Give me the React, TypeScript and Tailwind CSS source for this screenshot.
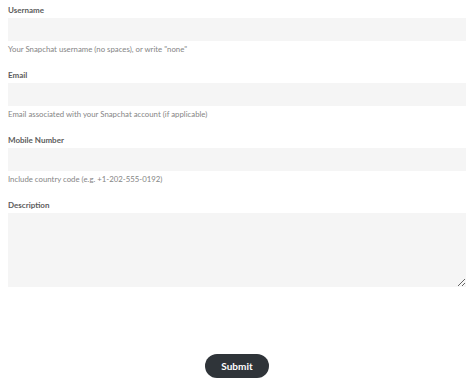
import React from "react";

const font = { fontFamily: "Lato, 'Open Sans', sans-serif" };

function Field({ label, help, tall }: { label: string; help?: string; tall?: boolean }) {
  return (
    <div className="flex flex-col">
      <label className="h-[12px] text-[8px] leading-[12px] font-bold text-[#5c5c5c]">{label}</label>
      {tall ? (
        <textarea className="mt-[2px] h-[74px] w-full bg-[#f5f5f5] outline-none resize-y" />
      ) : (
        <input className="mt-[2px] h-[23px] w-full bg-[#f5f5f5] outline-none" />
      )}
      {help && (
        <div className="mt-[2px] h-[12px] text-[7.8px] leading-[12px] text-[#858585]">{help}</div>
      )}
    </div>
  );
}

export default function App() {
  return (
    <div className="w-[474px] h-[382px] bg-white px-[8px] pt-[4px] flex flex-col" style={font}>
      <div className="flex flex-col gap-[14px] w-[458px]">
        <Field label="Username" help={'Your Snapchat username (no spaces), or write "none"'} />
        <Field label="Email" help="Email associated with your Snapchat account (if applicable)" />
        <Field label="Mobile Number" help="Include country code (e.g. +1-202-555-0192)" />
        <Field label="Description" tall />
      </div>
      <div className="flex justify-center mt-[67px]">
        <button className="h-[24px] w-[64px] rounded-full bg-[#2f3439] text-white text-[10px] font-bold leading-[24px]">
          Submit
        </button>
      </div>
    </div>
  );
}
